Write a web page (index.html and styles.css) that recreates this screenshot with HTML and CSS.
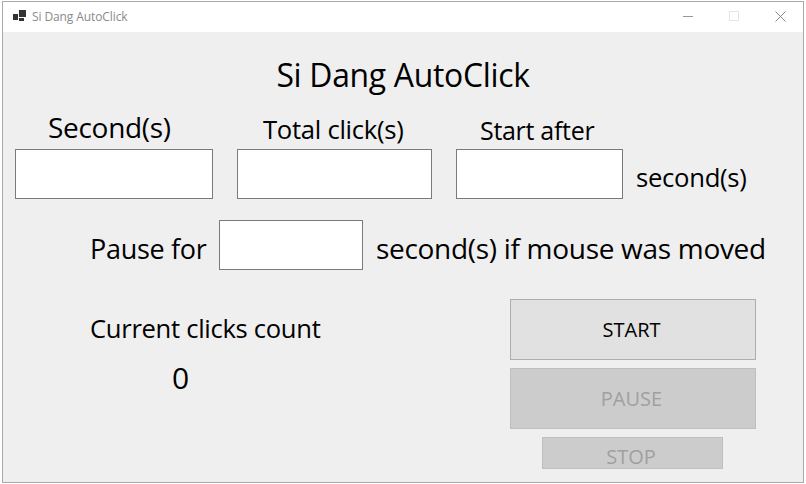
FILE: index.html
```html
<!DOCTYPE html>
<html lang="en">

<head>
    <meta charset="UTF-8">
    <title>Si Dang AutoClick</title>
    <link rel="stylesheet" href="styles.css">
</head>

<body>
    <div class="window">
        <div class="titlebar">
            <svg class="app-icon" width="14" height="12" viewBox="0 0 14 12">
                <rect x="0" y="4" width="5" height="6" fill="#333"></rect>
                <rect x="6" y="0" width="7" height="7" fill="#333"></rect>
                <rect x="6" y="8" width="5" height="3" fill="#333"></rect>
            </svg>
            <span class="app-name">Si Dang AutoClick</span>
            <div class="window-controls">
                <svg width="11" height="11" viewBox="0 0 11 11">
                    <path d="M0 5.5H10" stroke="#999" fill="none"></path>
                </svg>
                <svg width="11" height="11" viewBox="0 0 11 11">
                    <rect x="0.5" y="0.5" width="9" height="9" stroke="#e6e6e6" fill="none"></rect>
                </svg>
                <svg width="11" height="11" viewBox="0 0 11 11">
                    <path d="M0.5 0.5L10.5 10.5M10.5 0.5L0.5 10.5" stroke="#888" fill="none"></path>
                </svg>
            </div>
        </div>

        <div class="content">
            <h1 class="app-title">Si Dang AutoClick</h1>

            <div class="fields-row">
                <div class="field field-seconds">
                    <label class="label-big">Second(s)</label>
                    <input class="text-box" type="text">
                </div>
                <div class="field field-total">
                    <label>Total click(s)</label>
                    <input class="text-box" type="text">
                </div>
                <div class="field field-start">
                    <label>Start after</label>
                    <input class="text-box" type="text">
                </div>
                <span class="unit">second(s)</span>
            </div>

            <div class="pause-row">
                <span class="pause-label">Pause for</span>
                <input class="text-box pause-box" type="text">
                <span class="pause-text">second(s) if mouse was moved</span>
            </div>

            <div class="bottom-row">
                <div class="counter">
                    <p class="counter-label">Current clicks count</p>
                    <p class="counter-value">0</p>
                </div>
                <div class="buttons">
                    <button class="btn">START</button>
                    <button class="btn btn-disabled" disabled>PAUSE</button>
                    <button class="btn btn-disabled btn-stop" disabled>STOP</button>
                </div>
            </div>
        </div>
    </div>
</body>

</html>
```

FILE: styles.css
```css
* {
    box-sizing: border-box;
    margin: 0;
    padding: 0;
}

html,
body {
    height: 100%;
    background-color: white;
    overflow: hidden;
}

body {
    font-family: 'Open Sans', 'Noto Sans', sans-serif;
    color: #000;
}

.window {
    width: 802px;
    height: 482px;
    margin: 1px 0 0 2px;
    border: 1px solid #aaa;
    background-color: #efefef;
}

.titlebar {
    display: flex;
    align-items: center;
    height: 30px;
    background-color: white;
    padding-left: 10px;
    padding-bottom: 2px;
}

.app-icon {
    margin-right: 5px;
}

.app-name {
    font-size: 12px;
    letter-spacing: -0.1px;
    color: #8a8a8a;
}

.window-controls {
    display: flex;
    gap: 35px;
    margin-left: auto;
    padding-right: 17px;
}

.content {
    padding-top: 23px;
}

.app-title {
    font-size: 31.9px;
    font-weight: 400;
    line-height: 40px;
    text-align: center;
    letter-spacing: -0.3px;
    margin-bottom: 18px;
}

.fields-row {
    display: flex;
    align-items: flex-end;
    padding-left: 12px;
}

.field {
    display: flex;
    flex-direction: column;
}

.field label {
    font-size: 25.7px;
    line-height: 34px;
    margin-bottom: 2px;
    letter-spacing: -0.3px;
}

.field .label-big {
    font-size: 28px;
    line-height: 28px;
    letter-spacing: -0.3px;
    padding-left: 33px;
    margin-bottom: 8px;
}

.field-seconds {
    width: 198px;
    margin-right: 24px;
}

.field-total {
    width: 195px;
    margin-right: 24px;
}

.field-total label {
    padding-left: 26px;
}

.field-start {
    width: 167px;
    margin-right: 13px;
}

.field-start label {
    font-size: 25px;
    padding-left: 24px;
}

.text-box {
    display: block;
    width: 100%;
    height: 50px;
    background-color: white;
    border: 1px solid #7a7a7a;
    border-radius: 0;
}

.unit {
    font-size: 25.7px;
    line-height: 40px;
    letter-spacing: -0.3px;
    margin-bottom: 1px;
}

.pause-row {
    display: flex;
    align-items: center;
    gap: 13px;
    margin-top: 21px;
    padding-left: 87px;
    font-size: 28px;
    letter-spacing: -0.3px;
}

.pause-label {
    font-size: 27px;
    width: 116px;
    white-space: nowrap;
    padding-top: 6px;
}

.pause-text {
    padding-top: 6px;
}

.pause-box {
    width: 144px;
}

.bottom-row {
    display: flex;
    margin-top: 29px;
}

.counter {
    width: 507px;
    padding-left: 87px;
}

.counter-label {
    font-size: 25.6px;
    letter-spacing: -0.3px;
    line-height: 60px;
}

.counter-value {
    font-size: 30px;
    line-height: 40px;
    padding-left: 82px;
    margin-top: -1px;
}

.buttons {
    display: flex;
    flex-direction: column;
    align-items: center;
    gap: 8px;
    width: 246px;
}

.btn {
    width: 246px;
    height: 61px;
    font-family: inherit;
    font-size: 20px;
    color: #000;
    background-color: #e1e1e1;
    border: 1px solid #adadad;
    padding-right: 3px;
}

.btn-disabled {
    color: #a0a0a0;
    background-color: #cccccc;
    border-color: #bfbfbf;
}

.btn-stop {
    width: 181px;
    height: 32px;
    margin-right: 1px;
    padding-top: 8px;
    line-height: 22px;
}
```
